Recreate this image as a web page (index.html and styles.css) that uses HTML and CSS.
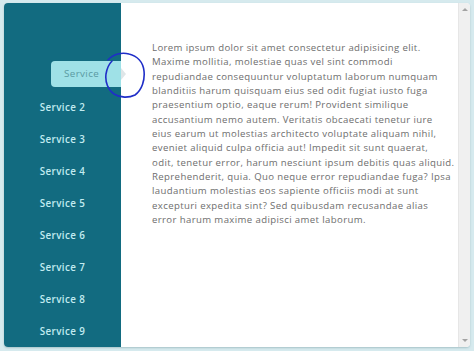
FILE: index.html
```html
<!DOCTYPE html>
<html>
<head>
<meta charset="utf-8">
<link rel="stylesheet" href="styles.css">
</head>
<body>
<div class="frame">
  <nav class="sidebar">
    <div class="item active"><span class="pill">Service</span></div>
    <div class="item">Service 2</div>
    <div class="item">Service 3</div>
    <div class="item">Service 4</div>
    <div class="item">Service 5</div>
    <div class="item">Service 6</div>
    <div class="item">Service 7</div>
    <div class="item">Service 8</div>
    <div class="item">Service 9</div>
  </nav>
  <main class="content">
    <p class="text">Lorem ipsum dolor sit amet consectetur adipisicing elit.<br>
Maxime mollitia, molestiae quas vel sint commodi<br>
repudiandae consequuntur voluptatum laborum numquam<br>
blanditiis harum quisquam eius sed odit fugiat iusto fuga<br>
praesentium optio, eaque rerum! Provident similique<br>
accusantium nemo autem. Veritatis obcaecati tenetur iure<br>
eius earum ut molestias architecto voluptate aliquam nihil,<br>
eveniet aliquid culpa officia aut! Impedit sit sunt quaerat,<br>
odit, tenetur error, harum nesciunt ipsum debitis quas aliquid.<br>
Reprehenderit, quia. Quo neque error repudiandae fuga? Ipsa<br>
laudantium molestias eos sapiente officiis modi at sunt<br>
excepturi expedita sint? Sed quibusdam recusandae alias<br>
error harum maxime adipisci amet laborum.</p>
  </main>
  <div class="scrollbar">
    <span class="arrow up"></span>
    <span class="arrow down"></span>
  </div>
  <svg class="scribble" width="44" height="48" viewBox="0 0 44 48">
    <path d="M4 8 C9 2 18 0 25 2 C33 4 39 10 40 19 C41 28 38 38 31 43 C25 46 16 46 10 42 C4 38 1 30 2 22 C3 16 5 12 8 9" fill="none" stroke="#1f2ec8" stroke-width="1.6" stroke-linecap="round"/>
  </svg>
</div>
</body>
</html>
```
FILE: styles.css
```css
html, body {
  margin: 0;
  padding: 0;
}
body {
  background: #d6eaee;
  padding: 3px 4px;
  width: 474px;
  height: 351px;
  box-sizing: border-box;
  font-family: "Open Sans", "Noto Sans", sans-serif;
}
.frame {
  position: relative;
  display: flex;
  width: 466px;
  height: 344px;
  background: #ffffff;
  border-radius: 4px;
  box-shadow: 0 1px 2px rgba(80, 120, 130, 0.35);
}
.sidebar {
  width: 117px;
  flex: none;
  background: #126b80;
  border-radius: 4px 0 0 4px;
  display: flex;
  flex-direction: column;
  padding-top: 55px;
  box-sizing: border-box;
}
.item {
  height: 32px;
  display: flex;
  align-items: center;
  justify-content: center;
  color: #c2ebf0;
  font-size: 9.8px;
  font-weight: 600;
  letter-spacing: 0.4px;
}
.item.active {
  justify-content: flex-end;
  margin-bottom: 2px;
  position: relative;
}
.pill {
  display: flex;
  align-items: center;
  height: 26px;
  width: 70px;
  box-sizing: border-box;
  padding-left: 13px;
  background: #9fe1e7;
  color: #5a9aa2;
  font-weight: 500;
  border-radius: 4px 0 0 4px;
}
.item.active::after {
  content: "";
  position: absolute;
  right: -5px;
  top: 10px;
  border-top: 6px solid transparent;
  border-bottom: 6px solid transparent;
  border-left: 5px solid #dfe6e8;
}
.content {
  flex: 1;
  padding: 38px 0 0 31px;
}
.text {
  margin: 0;
  white-space: nowrap;
  font-size: 9.6px;
  line-height: 14.35px;
  letter-spacing: 0.38px;
  color: #6e6e6e;
}
.scrollbar {
  width: 12px;
  flex: none;
  background: #f0f0f0;
  border-left: 1px solid #e6e6e6;
  display: flex;
  flex-direction: column;
  justify-content: space-between;
  align-items: center;
  padding: 5px 0;
  box-sizing: border-box;
  border-radius: 0 4px 4px 0;
}
.arrow {
  width: 0;
  height: 0;
  border-left: 3px solid transparent;
  border-right: 3px solid transparent;
}
.arrow.up {
  border-bottom: 3px solid #a3a3a3;
}
.arrow.down {
  border-top: 3px solid #a3a3a3;
}
.scribble {
  position: absolute;
  left: 100px;
  top: 49px;
}
```
